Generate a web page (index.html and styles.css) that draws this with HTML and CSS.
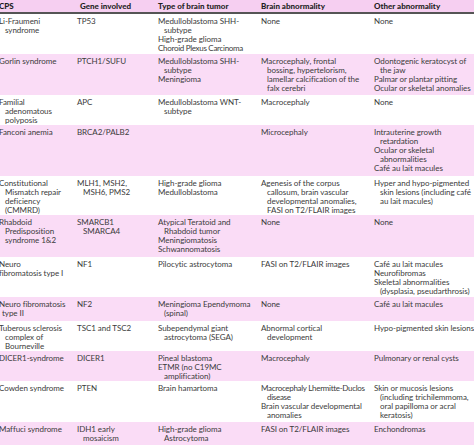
FILE: index.html
```html
<!DOCTYPE html>
<html>
<head>
<meta charset="utf-8">
<link rel="stylesheet" href="styles.css">
</head>
<body>
<table class="cps">
  <colgroup>
    <col class="c1"><col class="c2"><col class="c3"><col class="c4"><col class="c5">
  </colgroup>
  <thead>
    <tr class="head">
      <th>CPS</th><th class="hg">Gene involved</th><th>Type of brain tumor</th><th>Brain abnormality</th><th>Other abnormality</th>
    </tr>
  </thead>
  <tbody>
    <tr class="r1">
      <td><div class="it">Li-Fraumeni<br>syndrome</div></td>
      <td><div class="it">TP53</div></td>
      <td><div class="it">Medulloblastoma SHH-<br>subtype</div><div class="it">High-grade glioma</div><div class="it tight">Choroid Plexus Carcinoma</div></td>
      <td><div class="it">None</div></td>
      <td><div class="it">None</div></td>
    </tr>
    <tr class="r2 pink">
      <td><div class="it">Gorlin syndrome</div></td>
      <td><div class="it">PTCH1/SUFU</div></td>
      <td><div class="it">Medulloblastoma SHH-<br>subtype</div><div class="it">Meningioma</div></td>
      <td><div class="it">Macrocephaly, frontal<br>bossing, hypertelorism,<br>lamellar calcification of the<br>falx cerebri</div></td>
      <td><div class="it">Odontogenic keratocyst of<br>the jaw</div><div class="it">Palmar or plantar pitting</div><div class="it">Ocular or skeletal anomalies</div></td>
    </tr>
    <tr class="r3">
      <td><div class="it">Familial<br>adenomatous<br>polyposis</div></td>
      <td><div class="it">APC</div></td>
      <td><div class="it">Medulloblastoma WNT-<br>subtype</div></td>
      <td><div class="it">Macrocephaly</div></td>
      <td><div class="it">None</div></td>
    </tr>
    <tr class="r4 pink">
      <td><div class="it">Fanconi anemia</div></td>
      <td><div class="it">BRCA2/PALB2</div></td>
      <td></td>
      <td><div class="it">Microcephaly</div></td>
      <td><div class="it">Intrauterine growth<br>retardation</div><div class="it">Ocular or skeletal<br>abnormalities</div><div class="it">Café au lait macules</div></td>
    </tr>
    <tr class="r5">
      <td><div class="it">Constitutional<br>Mismatch repair<br>deficiency<br>(CMMRD)</div></td>
      <td><div class="it">MLH1, MSH2,<br>MSH6, PMS2</div></td>
      <td><div class="it">High-grade glioma</div><div class="it">Medulloblastoma</div></td>
      <td><div class="it">Agenesis of the corpus<br>callosum, brain vascular<br>developmental anomalies,<br>FASI on T2/FLAIR images</div></td>
      <td><div class="it">Hyper and hypo-pigmented<br>skin lesions (including café<br>au lait macules)</div></td>
    </tr>
    <tr class="r6 pink">
      <td><div class="it">Rhabdoid<br>Predisposition<br>syndrome 1&amp;2</div></td>
      <td><div class="it">SMARCB1<br>SMARCA4</div></td>
      <td><div class="it">Atypical Teratoid and<br>Rhabdoid tumor</div><div class="it">Meningiomatosis</div><div class="it">Schwannomatosis</div></td>
      <td><div class="it">None</div></td>
      <td><div class="it">None</div></td>
    </tr>
    <tr class="r7">
      <td><div>Neuro<br>fibromatosis type I</div></td>
      <td><div class="it">NF1</div></td>
      <td><div class="it">Pilocytic astrocytoma</div></td>
      <td><div class="it">FASI on T2/FLAIR images</div></td>
      <td><div class="it">Café au lait macules</div><div class="it">Neurofibromas</div><div class="it">Skeletal abnormalities<br>(dysplasia, pseudarthrosis)</div></td>
    </tr>
    <tr class="r8 pink">
      <td><div class="it small">Neuro fibromatosis<br>type II</div></td>
      <td><div class="it">NF2</div></td>
      <td><div class="it">Meningioma Ependymoma<br>(spinal)</div></td>
      <td><div class="it">None</div></td>
      <td><div class="it">Café au lait macules</div></td>
    </tr>
    <tr class="r9">
      <td><div class="it">Tuberous sclerosis<br>complex of<br>Bourneville</div></td>
      <td><div class="it">TSC1 and TSC2</div></td>
      <td><div class="it">Subependymal giant<br>astrocytoma (SEGA)</div></td>
      <td><div class="it">Abnormal cortical<br>development</div></td>
      <td><div class="it">Hypo-pigmented skin lesions</div></td>
    </tr>
    <tr class="r10 pink">
      <td><div class="it">DICER1-syndrome</div></td>
      <td><div class="it">DICER1</div></td>
      <td><div class="it">Pineal blastoma</div><div class="it">ETMR (no C19MC<br>amplification)</div></td>
      <td><div class="it">Macrocephaly</div></td>
      <td><div class="it">Pulmonary or renal cysts</div></td>
    </tr>
    <tr class="r11">
      <td><div class="it">Cowden syndrome</div></td>
      <td><div class="it">PTEN</div></td>
      <td><div class="it">Brain hamartoma</div></td>
      <td><div class="it tight">Macrocephaly Lhermitte-Duclos<br>disease</div><div class="it">Brain vascular developmental<br>anomalies</div></td>
      <td><div class="it">Skin or mucosis lesions<br>(including trichilemmoma,<br>oral papilloma or acral<br>keratosis)</div></td>
    </tr>
    <tr class="r12 pink">
      <td><div class="it">Maffuci syndrome</div></td>
      <td><div class="it">IDH1 early<br>mosaicism</div></td>
      <td><div class="it">High-grade glioma<br>Astrocytoma</div></td>
      <td><div class="it">FASI on T2/FLAIR images</div></td>
      <td><div class="it">Enchondromas</div></td>
    </tr>
  </tbody>
</table>
</body>
</html>
```
FILE: styles.css
```css
html, body {
  margin: 0;
  padding: 0;
  background: #ffffff;
}
body {
  width: 474px;
  height: 445px;
  overflow: hidden;
  font-family: Lato, "Open Sans", sans-serif;
  font-size: 8px;
  line-height: 9px;
  letter-spacing: -0.05px;
  color: #3b3b3b;
}
.cps {
  border-collapse: collapse;
  table-layout: fixed;
  width: 475px;
  margin-left: -1px;
}
.c1 { width: 78px; }
.c2 { width: 81px; }
.c3 { width: 103px; }
.c4 { width: 113px; }
.c5 { width: 100px; }
.cps th {
  background: #f6cff1;
  color: #1f1f1f;
  font-weight: 900;
  text-align: left;
  padding: 1px 0 1px 0;
  height: 10px;
  line-height: 9px;
  border-bottom: 2px solid #555555;
  white-space: nowrap;
  letter-spacing: 0;
}
.cps th.hg { padding-left: 3px; }
.cps td {
  vertical-align: top;
  padding: 3px 0 0 0;
  white-space: nowrap;
}
.pink td {
  background: #fadcf6;
}
.it {
  padding-left: 6px;
  text-indent: -6px;
}
.it.small {
  padding-left: 3px;
  text-indent: -3px;
}
.tight { letter-spacing: -0.3px; }
.r1 { height: 41px; }
.r2 { height: 41px; }
.r3 { height: 30px; }
.r4 { height: 51px; }
.r5 { height: 39px; }
.r6 { height: 42px; }
.r7 { height: 40px; }
.r8 { height: 24px; }
.r9 { height: 30px; }
.r10 { height: 30px; }
.r11 { height: 41px; }
.r12 { height: 30px; }
```
